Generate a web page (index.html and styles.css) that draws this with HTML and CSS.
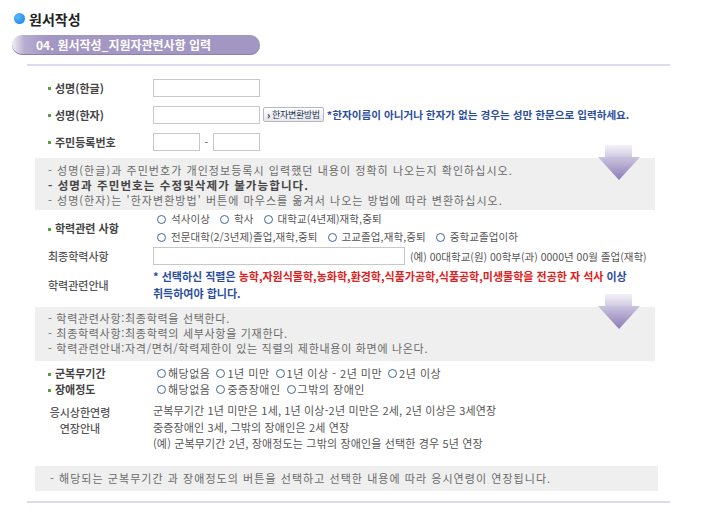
FILE: index.html
```html
<!DOCTYPE html>
<html lang="ko">
<head>
  <meta charset="UTF-8">
  <title>원서작성 - 지원자관련사항 입력</title>
  <link rel="stylesheet" href="styles.css">
</head>
<body>
  <div class="page">
    <h1 class="title"><span class="dot"></span>원서작성</h1>
    <div class="step">04. 원서작성_지원자관련사항 입력</div>

    <div class="panel">
      <div class="rows first">
        <div class="row">
          <div class="label bullet">성명(한글)</div>
          <input class="field" type="text">
        </div>
        <div class="row">
          <div class="label bullet">성명(한자)</div>
          <input class="field" type="text">
          <button class="hanja-btn" type="button"><span class="chev">›</span>한자변환방법</button>
          <span class="hanja-note">*한자이름이 아니거나 한자가 없는 경우는 성만 한문으로 입력하세요.</span>
        </div>
        <div class="row">
          <div class="label bullet">주민등록번호</div>
          <input class="field short" type="text">
          <span class="dash">-</span>
          <input class="field short" type="text">
        </div>
      </div>

      <div class="note">
        <p>- 성명(한글)과 주민번호가 개인정보등록시 입력했던 내용이 정확히 나오는지 확인하십시오.</p>
        <p class="strong">- 성명과 주민번호는 수정및삭제가 불가능합니다.</p>
        <p>- 성명(한자)는 '한자변환방법' 버튼에 마우스를 옮겨서 나오는 방법에 따라 변환하십시오.</p>
        <svg class="arrow" width="42" height="36" viewBox="0 0 42 36">
          <defs>
            <linearGradient id="stem1" x1="0" y1="0" x2="0" y2="1">
              <stop offset="0" stop-color="#f4f2f8"/>
              <stop offset="1" stop-color="#cdc7df"/>
            </linearGradient>
            <linearGradient id="head1" x1="0" y1="0" x2="0" y2="1">
              <stop offset="0" stop-color="#cbc4de"/>
              <stop offset="1" stop-color="#8b7db5"/>
            </linearGradient>
          </defs>
          <rect x="7" y="0" width="27" height="13" fill="url(#stem1)"/>
          <polygon points="0,12 42,12 21,35" fill="url(#head1)"/>
        </svg>
      </div>

      <div class="rows">
        <div class="row top">
          <div class="label bullet">학력관련 사항</div>
          <div class="radios">
            <div class="radio-line">
              <span class="opt"><span class="radio"></span>석사이상</span>
              <span class="opt"><span class="radio"></span>학사</span>
              <span class="opt"><span class="radio"></span>대학교(4년제)재학,중퇴</span>
            </div>
            <div class="radio-line">
              <span class="opt"><span class="radio"></span>전문대학(2/3년제)졸업,재학,중퇴</span>
              <span class="opt"><span class="radio"></span>고교졸업,재학,중퇴</span>
              <span class="opt"><span class="radio"></span>중학교졸업이하</span>
            </div>
          </div>
        </div>
        <div class="row school">
          <div class="label plain">최종학력사항</div>
          <input class="field wide" type="text">
          <span class="example">(예) 00대학교(원) 00학부(과) 0000년 00월 졸업(재학)</span>
        </div>
        <div class="row guide">
          <div class="label plain">학력관련안내</div>
          <div class="guide-text">
            <span class="blue">* 선택하신 직렬은 </span><span class="red">농학,자원식물학,농화학,환경학,식품가공학,식품공학,미생물학을 전공한 자 석사</span> <span class="blue">이상</span><br>
            <span class="blue">취득하여야 합니다.</span>
          </div>
        </div>
      </div>

      <div class="note second">
        <p>- 학력관련사항:최종학력을 선택한다.</p>
        <p>- 최종학력사항:최종학력의 세부사항을 기재한다.</p>
        <p>- 학력관련안내:자격/면허/학력제한이 있는 직렬의 제한내용이 화면에 나온다.</p>
        <svg class="arrow" width="42" height="36" viewBox="0 0 42 36">
          <defs>
            <linearGradient id="stem2" x1="0" y1="0" x2="0" y2="1">
              <stop offset="0" stop-color="#f4f2f8"/>
              <stop offset="1" stop-color="#cdc7df"/>
            </linearGradient>
            <linearGradient id="head2" x1="0" y1="0" x2="0" y2="1">
              <stop offset="0" stop-color="#cbc4de"/>
              <stop offset="1" stop-color="#8b7db5"/>
            </linearGradient>
          </defs>
          <rect x="7" y="0" width="27" height="13" fill="url(#stem2)"/>
          <polygon points="0,12 42,12 21,35" fill="url(#head2)"/>
        </svg>
      </div>

      <div class="rows">
        <div class="service">
          <div class="row line">
            <div class="label bullet">군복무기간</div>
            <div class="radio-line tight">
              <span class="opt"><span class="radio"></span>해당없음</span>
              <span class="opt"><span class="radio"></span>1년 미만</span>
              <span class="opt"><span class="radio"></span>1년 이상 - 2년 미만</span>
              <span class="opt"><span class="radio"></span>2년 이상</span>
            </div>
          </div>
          <div class="row line">
            <div class="label bullet">장애정도</div>
            <div class="radio-line tight">
              <span class="opt"><span class="radio"></span>해당없음</span>
              <span class="opt"><span class="radio"></span>중증장애인</span>
              <span class="opt"><span class="radio"></span>그밖의 장애인</span>
            </div>
          </div>
        </div>
        <div class="row age">
          <div class="label plain center">응시상한연령<br>연장안내</div>
          <div class="age-text">
            군복무기간 1년 미만은 1세, 1년 이상-2년 미만은 2세, 2년 이상은 3세연장<br>
            중증장애인 3세, 그밖의 장애인은 2세 연장<br>
            (예) 군복무기간 2년, 장애정도는 그밖의 장애인을 선택한 경우 5년 연장
          </div>
        </div>
      </div>

      <div class="note last">
        <p>- 해당되는 군복무기간 과 장애정도의 버튼을 선택하고 선택한 내용에 따라 응시연령이 연장됩니다.</p>
      </div>
    </div>
  </div>
</body>
</html>
```

FILE: styles.css
```css
body {
  margin: 0;
  background-color: #ffffff;
  color: #555555;
  font-family: "Noto Sans CJK KR", "Noto Sans", sans-serif;
  font-size: 11px;
}
.page {
  padding: 9px 0 0 14px;
}
.title {
  display: flex;
  align-items: center;
  gap: 4px;
  margin: 0;
  height: 19px;
  font-size: 14px;
  font-weight: bold;
  color: #222222;
}
.dot {
  width: 11px;
  height: 11px;
  border-radius: 50%;
  background: radial-gradient(circle at 35% 35%, #5cb8ff, #0a7fe6);
}
.step {
  width: 224px;
  height: 20px;
  margin: 7px 0 0 -2px;
  padding-left: 24px;
  border-radius: 10px;
  background: linear-gradient(to right, #f2f0f6 0, #b7adcf 5%, #a497c4 14%, #a296c3 100%);
  box-shadow: inset 0 -1px 0 #8c80b0;
  color: #ffffff;
  font-size: 12px;
  font-weight: bold;
  line-height: 20px;
}
.panel {
  width: 643px;
  margin: 9px 0 0 13px;
  padding-bottom: 10px;
  border-top: 2px solid #dcdaee;
  border-bottom: 2px solid #dcdaee;
}
.rows {
  padding-left: 21px;
}
.rows.first {
  padding-top: 8px;
}
.row {
  display: flex;
  align-items: center;
  min-height: 27px;
}
.row.top {
  min-height: 36px;
}
.row.school {
  min-height: 20px;
}
.row.guide {
  min-height: 34px;
  margin-top: 2px;
}
.label {
  width: 105px;
  flex-shrink: 0;
  color: #444444;
  font-weight: bold;
}
.label.bullet::before {
  content: "";
  display: inline-block;
  width: 3px;
  height: 3px;
  margin: 0 4px 2px 0;
  vertical-align: middle;
  background-color: #5aa03a;
}
.label.plain {
  color: #555555;
  font-weight: 500;
}
.label.center {
  width: 64px;
  margin-right: 41px;
  text-align: center;
  line-height: 16px;
  align-self: flex-start;
  padding-top: 2px;
}
.field {
  width: 103px;
  height: 14px;
  padding: 1px;
  border: 1px solid #c8c8c8;
  background-color: #ffffff;
}
.field.short {
  width: 43px;
}
.field.wide {
  width: 248px;
}
.dash {
  width: 13px;
  text-align: center;
}
.hanja-btn {
  display: flex;
  align-items: center;
  gap: 2px;
  height: 15px;
  margin-left: 3px;
  padding: 0 3px;
  border: 1px solid #b8b8c4;
  border-radius: 2px;
  background: linear-gradient(#ffffff, #e6e6ec);
  color: #223355;
  font-family: inherit;
  font-size: 9px;
  letter-spacing: -0.3px;
}
.chev {
  font-weight: bold;
  font-size: 10px;
  color: #111133;
}
.hanja-note {
  margin-left: 3px;
  color: #2c4ea0;
  font-size: 10.6px;
  font-weight: bold;
}
.note {
  position: relative;
  margin: 3px 15px 0 8px;
  padding: 5px 13px 2px;
  background-color: #efefef;
  color: #6a6a6a;
  letter-spacing: 1.05px;
}
.note p {
  margin: 0;
  line-height: 15px;
}
.note p.strong {
  color: #444444;
  font-weight: bold;
  font-size: 11.5px;
  letter-spacing: 1.1px;
}
.note.second {
  margin-top: 5px;
  padding-top: 4px;
  padding-bottom: 5px;
  letter-spacing: 0.7px;
}
.note.last {
  margin-top: 14px;
  margin-right: 12px;
  padding: 5px 15px;
  letter-spacing: 1.05px;
}
.arrow {
  position: absolute;
  top: -13px;
  right: 15px;
}
.radios {
  display: flex;
  flex-direction: column;
}
.radio-line {
  display: flex;
  gap: 10px;
  padding-left: 4px;
  line-height: 18px;
  font-size: 10.5px;
  letter-spacing: 0.1px;
}
.radio-line.tight {
  gap: 6px;
  line-height: 16px;
  font-size: 11px;
  letter-spacing: 0.5px;
}
.opt {
  display: flex;
  align-items: center;
  gap: 5px;
}
.tight .opt {
  gap: 2px;
}
.radio {
  width: 7px;
  height: 7px;
  border: 1.5px solid #3d64a6;
  border-radius: 50%;
  background-color: #ffffff;
}
.example {
  margin-left: 5px;
  font-size: 10.5px;
}
.guide-text {
  line-height: 17px;
  font-weight: bold;
}
.blue {
  color: #2c4ea0;
}
.red {
  color: #e02020;
}
.service {
  padding-top: 4px;
}
.row.line {
  min-height: 16px;
}
.row.age {
  margin-top: 5px;
}
.age-text {
  line-height: 16.5px;
  letter-spacing: 0.15px;
}
```
